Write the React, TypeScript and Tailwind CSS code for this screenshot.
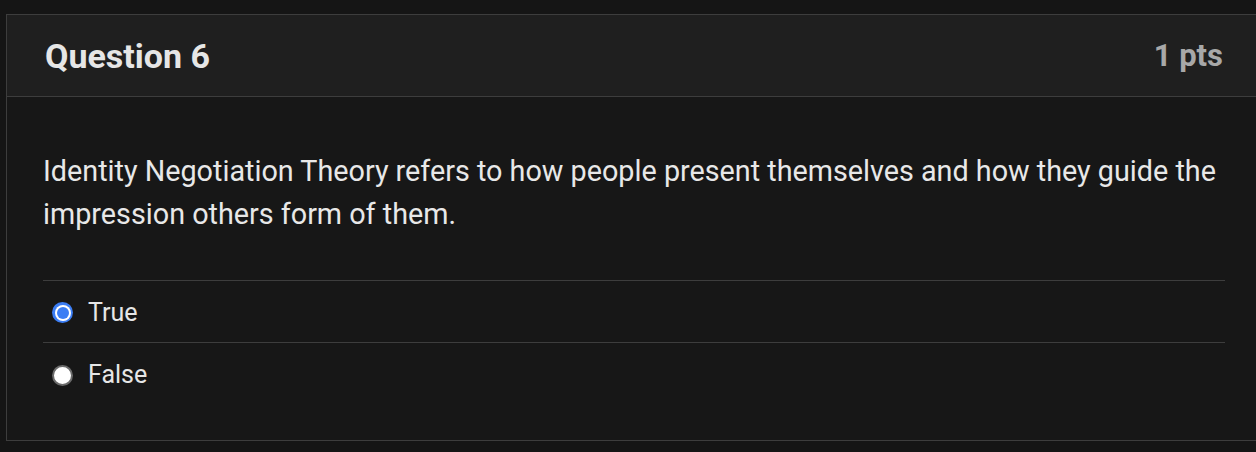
import { useState } from "react";

const options = ["True", "False"];

function Radio({ checked }: { checked: boolean }) {
  if (checked) {
    return (
      <span className="flex h-[21px] w-[21px] items-center justify-center rounded-full bg-[#3b7df4]">
        <span className="flex h-[16px] w-[16px] items-center justify-center rounded-full bg-white">
          <span className="h-[12px] w-[12px] rounded-full bg-[#3b7df4]" />
        </span>
      </span>
    );
  }
  return <span className="h-[21px] w-[21px] rounded-full border-2 border-[#6b6b6b] bg-white" />;
}

export default function App() {
  const [answer, setAnswer] = useState("True");

  return (
    <div className="h-[452px] overflow-hidden bg-[#151515] pl-[6px] pt-[14px] font-['Roboto',sans-serif]">
      <div className="w-[1262px] border border-[#3d3d3d] bg-[#171717]">
        <div className="flex h-[82px] items-center justify-between border-b border-[#3d3d3d] bg-[#1f1f1f] pl-[38px] pr-[44px] pt-[2px]">
          <h2 className="text-[34px] font-bold text-[#e6e6e6]">Question 6</h2>
          <span className="text-[31px] font-bold text-[#a8a8a8]">1 pts</span>
        </div>
        <div className="pl-[36px] pr-[42px] pt-[53px] pb-[35px]">
          <p className="text-[28.75px] leading-[43px] text-[#e8e8e8]">
            Identity Negotiation Theory refers to how people present themselves and how they guide the impression others form of them.
          </p>
          <div className="mt-[44px] border-t border-[#3d3d3d]">
            {options.map((o, i) => (
              <label
                key={o}
                onClick={() => setAnswer(o)}
                className={`flex h-[62px] cursor-pointer items-center gap-[15px] pl-[9px] pt-[2px] ${i === 0 ? "border-b border-[#3d3d3d]" : ""}`}
              >
                <Radio checked={answer === o} />
                <span className="text-[25px] text-[#e6e6e6]">{o}</span>
              </label>
            ))}
          </div>
        </div>
      </div>
    </div>
  );
}
